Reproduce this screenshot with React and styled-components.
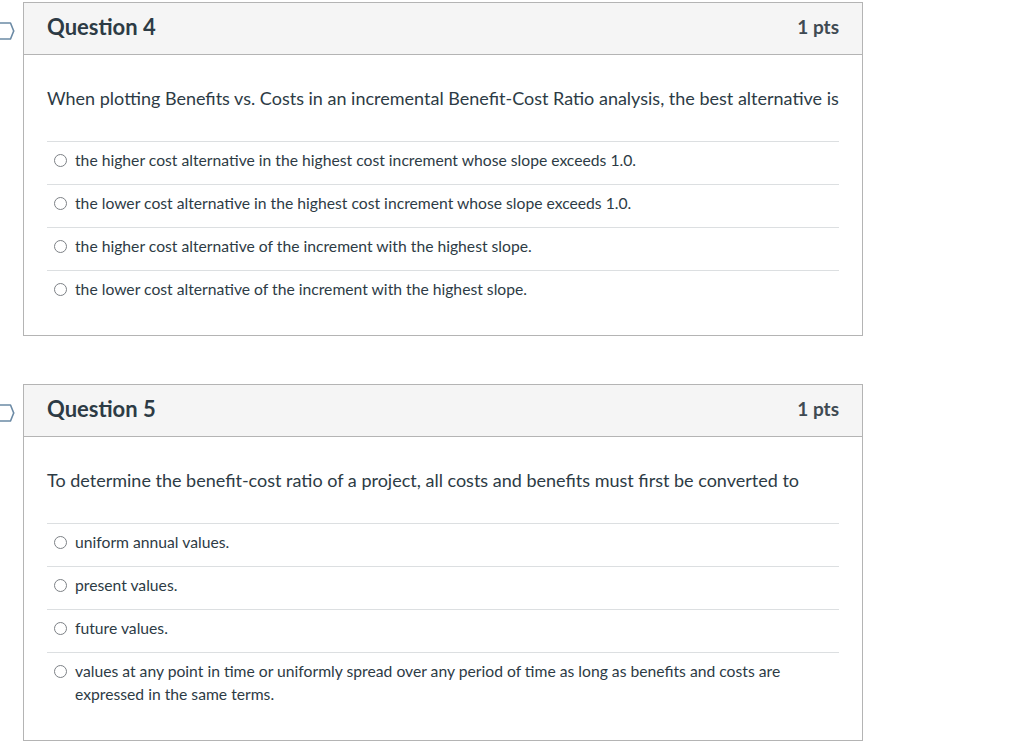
import React from "react";
import styled, { createGlobalStyle } from "styled-components";

const Global = createGlobalStyle`
  html, body { margin: 0; padding: 0; background: #fff; }
  body { font-family: Lato, "Noto Sans", sans-serif; color: #2d3b45; }
`;

const Page = styled.div`
  display: flex;
  flex-direction: column;
  gap: 48px;
  padding: 2px 0 0 0;
  width: 863px;
`;

const QuestionRow = styled.div`
  display: flex;
  align-items: flex-start;
`;

const FlagColumn = styled.div`
  width: 23px;
  flex: none;
  padding-top: 20px;
  overflow: hidden;
  display: flex;
  justify-content: flex-end;
`;

const FlagSvg = styled.svg`
  flex: none;
  display: block;
  margin-right: 8px;
`;

const Card = styled.div`
  flex: 1;
  border: 1px solid #b4b4b4;
  background: #fff;
`;

const Header = styled.div`
  display: flex;
  align-items: center;
  justify-content: space-between;
  height: 51px;
  padding: 0 23px;
  background: #f5f5f5;
  border-bottom: 1px solid #b4b4b4;
`;

const Title = styled.div`
  font-size: 22px;
  line-height: 26px;
  font-weight: 700;
  color: #2d3b45;
  margin-top: -4px;
`;

const Points = styled.div`
  font-size: 19px;
  line-height: 24px;
  font-weight: 700;
  color: #3f4a52;
  margin-top: -4px;
`;

const Body = styled.div`
  padding: 31px 23px 22px 23px;
`;

const Prompt = styled.div`
  font-size: 18px;
  line-height: 25px;
  margin-bottom: 30px;
`;

const Answers = styled.div`
  display: flex;
  flex-direction: column;
`;

const Answer = styled.label`
  display: flex;
  align-items: flex-start;
  gap: 8px;
  border-top: 1px solid #dcdfe1;
  padding: 6.5px 0 12.5px 7px;
  font-size: 15.7px;
  line-height: 23px;
`;

const Radio = styled.span`
  flex: none;
  width: 11px;
  height: 11px;
  border: 1px solid #7d8186;
  border-radius: 50%;
  margin-top: 5px;
  background: #fff;
`;

const Flag = () => (
  <FlagSvg width="32" height="18" viewBox="0 0 32 18">
    <path
      d="M1 2.5 Q1 1 2.5 1 H27.5 L30.5 8.5 Q31 9 30.5 9.5 L27.5 17 H2.5 Q1 17 1 15.5 Z"
      fill="none"
      stroke="#6b8aa5"
      strokeWidth="1.6"
      strokeLinejoin="round"
    />
  </FlagSvg>
);

const questions = [
  {
    n: 4,
    prompt:
      "When plotting Benefits vs. Costs in an incremental Benefit-Cost Ratio analysis, the best alternative is",
    answers: [
      "the higher cost alternative in the highest cost increment whose slope exceeds 1.0.",
      "the lower cost alternative in the highest cost increment whose slope exceeds 1.0.",
      "the higher cost alternative of the increment with the highest slope.",
      "the lower cost alternative of the increment with the highest slope.",
    ],
  },
  {
    n: 5,
    prompt:
      "To determine the benefit-cost ratio of a project, all costs and benefits must first be converted to",
    answers: [
      "uniform annual values.",
      "present values.",
      "future values.",
      "values at any point in time or uniformly spread over any period of time as long as benefits and costs are expressed in the same terms.",
    ],
  },
];

export default function App() {
  return (
    <>
      <Global />
      <Page>
        {questions.map((q) => (
          <QuestionRow key={q.n}>
            <FlagColumn>
              <Flag />
            </FlagColumn>
            <Card>
              <Header>
                <Title>Question {q.n}</Title>
                <Points>1 pts</Points>
              </Header>
              <Body>
                <Prompt>{q.prompt}</Prompt>
                <Answers>
                  {q.answers.map((a) => (
                    <Answer key={a}>
                      <Radio />
                      <span>{a}</span>
                    </Answer>
                  ))}
                </Answers>
              </Body>
            </Card>
          </QuestionRow>
        ))}
      </Page>
    </>
  );
}
